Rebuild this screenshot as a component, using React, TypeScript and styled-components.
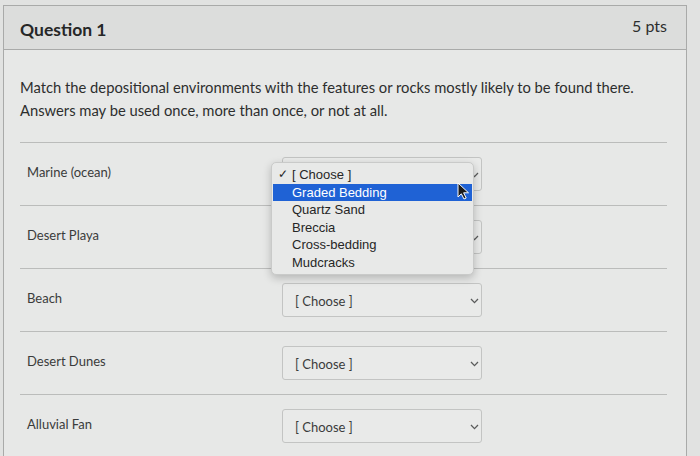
import React from "react";
import styled, { createGlobalStyle } from "styled-components";

const Global = createGlobalStyle`
  html, body { margin: 0; padding: 0; }
  body {
    background: #e1e2e1;
    font-family: Lato, "Open Sans", sans-serif;
    color: #2f3030;
    width: 700px;
    height: 456px;
    overflow: hidden;
  }
`;

const Card = styled.div`
  margin: 5px 0 0 3px;
  width: 684px;
  border: 1px solid #a9aaa9;
  border-bottom: none;
  background: #e7e8e7;
  height: 460px;
  box-sizing: border-box;
`;

const Header = styled.div`
  height: 43px;
  display: flex;
  align-items: center;
  justify-content: space-between;
  padding: 0 19px 0 16px;
  background: #dcdddc;
  border-bottom: 1px solid #a9aaa9;
`;

const Title = styled.h2`
  margin: 3px 0 0;
  font-size: 17.5px;
  font-weight: 700;
  color: #262727;
`;

const Points = styled.span`
  font-size: 16px;
  color: #2d2e2e;
  margin-top: -4px;
`;

const Body = styled.div`
  padding: 26px 19px 0 16px;
`;

const Instructions = styled.p`
  margin: 0 0 20px;
  font-size: 14.75px;
  line-height: 23px;
  color: #2d2e2e;
`;

const Row = styled.div`
  display: flex;
  align-items: flex-start;
  border-top: 1px solid #bbbcbb;
  padding: 14px 0 14px 7px;
  height: 34px;
`;

const Label = styled.div`
  width: 255px;
  padding-top: 7px;
  font-size: 13px;
  color: #3a3b3b;
`;

const SelectWrap = styled.div`
  position: relative;
  width: 200px;
`;

const SelectBox = styled.div`
  height: 34px;
  box-sizing: border-box;
  border: 1px solid #c3c4c3;
  border-radius: 3px;
  background: #e9eae9;
  display: flex;
  align-items: center;
  justify-content: space-between;
  padding: 2px 2px 0 12px;
  font-size: 13px;
  color: #3b3c3c;
`;

const Chevron = () => (
  <svg width="9" height="6" viewBox="0 0 9 6">
    <path d="M1 1 L4.5 4.6 L8 1" fill="none" stroke="#5a5b5b" strokeWidth="1.3" />
  </svg>
);

const Menu = styled.div`
  position: absolute;
  left: -11px;
  top: 5px;
  width: 203px;
  box-sizing: border-box;
  padding: 3px 1px 2px;
  background: #e8e9e8;
  border: 1px solid #c9cac9;
  border-radius: 5px;
  box-shadow: 0 3px 8px rgba(0, 0, 0, 0.22);
  z-index: 5;
  font-family: "Liberation Sans", Arial, sans-serif;
  font-size: 13px;
`;

const Item = styled.div<{ $active?: boolean }>`
  position: relative;
  height: 17.6px;
  line-height: 17.6px;
  padding-left: 19px;
  background: ${(p) => (p.$active ? "#1f62d5" : "transparent")};
  color: ${(p) => (p.$active ? "#ffffff" : "#262626")};
`;

const Check = styled.span`
  position: absolute;
  left: 5px;
  top: 0;
  font-size: 12px;
`;

const Cursor = styled.svg`
  position: absolute;
  right: 2px;
  top: -2px;
`;

const rows = ["Marine (ocean)", "Desert Playa", "Beach", "Desert Dunes", "Alluvial Fan"];
const options = ["Graded Bedding", "Quartz Sand", "Breccia", "Cross-bedding", "Mudcracks"];

export default function App() {
  return (
    <>
      <Global />
      <Card>
        <Header>
          <Title>Question 1</Title>
          <Points>5 pts</Points>
        </Header>
        <Body>
          <Instructions>
            Match the depositional environments with the features or rocks mostly likely to be found there.
            <br />
            Answers may be used once, more than once, or not at all.
          </Instructions>
          {rows.map((r, i) => (
            <Row key={r}>
              <Label>{r}</Label>
              <SelectWrap>
                <SelectBox>
                  <span>{i > 1 ? "[ Choose ]" : ""}</span>
                  <Chevron />
                </SelectBox>
                {i === 0 && (
                  <Menu>
                    <Item>
                      <Check>✓</Check>[ Choose ]
                    </Item>
                    {options.map((o, j) => (
                      <Item key={o} $active={j === 0}>
                        {o}
                        {j === 0 && (
                          <Cursor width="13" height="18" viewBox="0 0 13 18">
                            <path d="M1 1 L1 15 L4.3 11.8 L7 17 L9.2 16 L6.6 10.8 L11.5 10.8 Z" fill="#1b1b1b" stroke="#fff" strokeWidth="1" />
                          </Cursor>
                        )}
                      </Item>
                    ))}
                  </Menu>
                )}
              </SelectWrap>
            </Row>
          ))}
        </Body>
      </Card>
    </>
  );
}
